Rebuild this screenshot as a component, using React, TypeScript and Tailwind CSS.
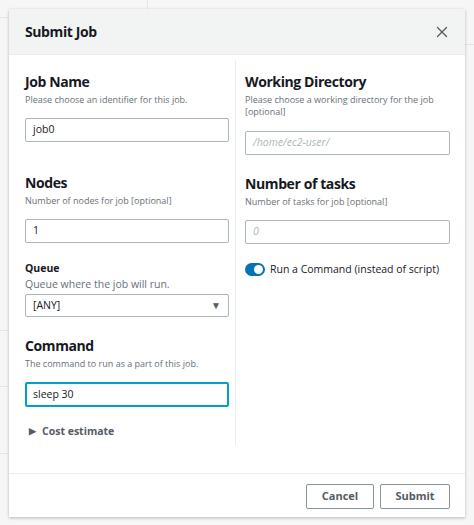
import { X } from "lucide-react"

const font = { fontFamily: '"Open Sans", "Noto Sans", sans-serif' }

const Title = ({ children }: { children: string }) => (
  <h2 className="text-[14px] leading-[20px] font-bold tracking-[-0.4px] text-[#16191f]">
    {children}
  </h2>
)

const Desc = ({ children }: { children: string }) => (
  <p className="mt-[2px] text-[9px] leading-[12px] text-[#687078]">{children}</p>
)

const Input = ({ value, placeholder }: { value?: string; placeholder?: string }) => (
  <div className="mt-3 flex h-[24px] items-center rounded-[2px] border border-[#aab7b8] bg-white px-[7px] text-[10.5px]">
    {value ? (
      <span className="text-[#16191f]">{value}</span>
    ) : (
      <span className="text-[#aab7b8] italic">{placeholder}</span>
    )}
  </div>
)

const App = () => {
  return (
    <div
      className="relative h-[525px] w-[474px] overflow-hidden bg-[#f6f6f6] pt-[9px] pl-[9px]"
      style={font}>
      {/* faint page behind the overlay */}
      <div className="absolute top-[17px] left-0 h-px w-[9px] bg-[#e6e6e6]" />
      <div className="absolute top-0 left-[147px] h-[9px] w-px bg-[#e6e6e6]" />
      <div className="absolute top-[330px] left-0 h-px w-[9px] bg-[#e6e6e6]" />
      <div className="absolute top-[386px] left-0 h-px w-[9px] bg-[#e6e6e6]" />
      <div className="absolute top-[453px] left-0 h-px w-[9px] bg-[#e6e6e6]" />
      <div className="absolute top-[44px] right-0 h-px w-[9px] bg-[#e6e6e6]" />

      <div className="relative flex h-[508px] w-[456px] flex-col bg-white shadow-[0_1px_3px_rgba(0,0,0,0.25)]">
        <div className="flex h-[46px] shrink-0 items-center justify-between border-b border-[#eaeded] bg-[#f2f3f3] pr-[14px] pl-[16px]">
          <span className="text-[14px] font-bold tracking-[-0.4px] text-[#16191f]">
            Submit Job
          </span>
          <X size={18} strokeWidth={1.7} className="text-[#545b64]" />
        </div>

        <div className="flex flex-1 pt-[5px] pr-[15px] pl-[16px]">
          <div className="flex h-[385px] w-[210px] flex-col pt-[12px] pr-[6px]">
            <Title>Job Name</Title>
            <Desc>Please choose an identifier for this job.</Desc>
            <Input value="job0" />

            <div className="mt-[31px]">
              <Title>Nodes</Title>
              <Desc>Number of nodes for job [optional]</Desc>
              <Input value="1" />
            </div>

            <div className="mt-[17px]">
              <div className="text-[10.5px] leading-[16px] font-bold text-[#16191f]">Queue</div>
              <div className="text-[10.5px] leading-[16px] text-[#687078]">
                Queue where the job will run.
              </div>
              <div className="mt-[2px] flex h-[23px] items-center justify-between rounded-[2px] border border-[#aab7b8] px-[7px] text-[10.5px] text-[#16191f]">
                <span>[ANY]</span>
                <span className="text-[10px] text-[#545b64]">▼</span>
              </div>
            </div>

            <div className="mt-[19px]">
              <Title>Command</Title>
              <Desc>The command to run as a part of this job.</Desc>
              <div className="mt-3 flex h-[25px] items-center rounded-[2px] border-2 border-[#00a1c9] px-[6px] text-[10.5px] text-[#16191f]">
                sleep 30
              </div>
            </div>

            <div className="mt-[16px] flex items-center gap-[6px] pl-[4px] text-[10.5px] leading-[16px] font-bold text-[#545b64]">
              <span className="text-[9px] text-[#545b64]">▶</span>
              <span>Cost estimate</span>
            </div>
          </div>

          <div className="flex h-[385px] flex-1 flex-col border-l border-[#eaeded] pt-[12px] pl-[9px]">
            <Title>Working Directory</Title>
            <Desc>Please choose a working directory for the job [optional]</Desc>
            <div className="mt-[1px]">
              <Input placeholder="/home/ec2-user/" />
            </div>

            <div className="mt-[19px]">
              <Title>Number of tasks</Title>
              <Desc>Number of tasks for job [optional]</Desc>
              <Input placeholder="0" />
            </div>

            <div className="mt-[17px] flex items-center gap-[5px]">
              <div className="flex h-[13px] w-[20px] items-center justify-end rounded-full bg-[#0073bb] pr-[2px]">
                <div className="h-[9px] w-[9px] rounded-full bg-white" />
              </div>
              <span className="text-[10.5px] leading-[16px] text-[#16191f]">
                Run a Command (instead of script)
              </span>
            </div>
          </div>
        </div>

        <div className="flex h-[44px] shrink-0 items-start justify-end gap-[6px] border-t border-[#eaeded] pt-[10px] pr-[15px]">
          <button className="h-[25px] w-[68px] rounded-[2px] border border-[#879596] text-[11px] font-bold text-[#545b64]">
            Cancel
          </button>
          <button className="h-[25px] w-[70px] rounded-[2px] border border-[#879596] text-[11px] font-bold text-[#545b64]">
            Submit
          </button>
        </div>
      </div>
    </div>
  )
}

export default App
